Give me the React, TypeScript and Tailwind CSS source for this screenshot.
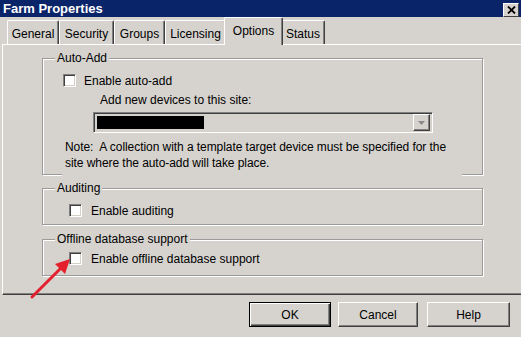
import React from 'react'

const font = { fontFamily: '"Liberation Sans", Arial, sans-serif' }

function Checkbox() {
  return (
    <span className="block w-[13px] h-[13px] shrink-0 bg-white border-t border-l border-[#808080] border-r border-b border-r-white border-b-white shadow-[inset_1px_1px_0_#404040,inset_-1px_-1px_0_#d4d0c8]" />
  )
}

function Tab({ label, width, active }: { label: string; width: string; active?: boolean }) {
  if (active) {
    return (
      <div
        className={`relative z-10 -mx-[2px] mb-[-1px] h-[28px] ${width} bg-[#d6d3ce] border-t border-l border-white border-r border-r-[#404040] shadow-[inset_-1px_0_0_#808080] rounded-t-[2px] flex justify-center pt-[4px] text-[12px] text-black`}
      >
        {label}
      </div>
    )
  }
  return (
    <div
      className={`h-[24px] ${width} border-t border-l border-white border-r border-r-[#404040] shadow-[inset_-1px_0_0_#808080] rounded-t-[2px] flex justify-center pt-[4px] text-[12px] text-black`}
    >
      {label}
    </div>
  )
}

function Button({ label, width, isDefault }: { label: string; width: string; isDefault?: boolean }) {
  return (
    <div
      className={`${width} h-[25px] flex items-center justify-center text-[12px] text-black ${
        isDefault
          ? 'border border-black shadow-[inset_1px_1px_0_#fff,inset_-1px_-1px_0_#404040,inset_-2px_-2px_0_#808080]'
          : 'border-t border-l border-white border-r border-b border-r-[#404040] border-b-[#404040] shadow-[inset_-1px_-1px_0_#808080]'
      }`}
    >
      {label}
    </div>
  )
}

const fieldset =
  'w-[441px] border border-[#9a9a9a] shadow-[inset_1px_1px_0_#fff,1px_1px_0_#fff]'
const legend = 'ml-[12px] px-[2px] leading-[14px] text-[12px] bg-[#d6d3ce]'

export default function App() {
  return (
    <div className="w-[521px] h-[337px] bg-[#d6d3ce] relative overflow-hidden text-black" style={font}>
      {/* title bar */}
      <div className="h-[17px] bg-[#0a246a] flex items-center justify-between pl-[3px] pr-[2px]">
        <span className="text-white font-bold text-[13px] leading-none">Farm Properties</span>
        <div className="w-[16px] h-[14px] mt-[2px] bg-[#d6d3ce] border-t border-l border-white border-r border-b border-r-[#404040] border-b-[#404040] flex items-center justify-center">
          <svg width="9" height="8" viewBox="0 0 9 8">
            <path d="M1 0.5 L8 7.5 M8 0.5 L1 7.5" stroke="#000" strokeWidth="1.8" />
          </svg>
        </div>
      </div>

      {/* tabs */}
      <div className="h-[27px] flex items-end pl-[7px]">
        <Tab label="General" width="w-[52px]" />
        <Tab label="Security" width="w-[55px]" />
        <Tab label="Groups" width="w-[51px]" />
        <Tab label="Licensing" width="w-[61px]" />
        <Tab label="Options" width="w-[59px]" active />
        <Tab label="Status" width="w-[44px]" />
      </div>

      {/* panel */}
      <div className="ml-[2px] h-[251px] border-t border-l border-white border-b border-b-[#404040] shadow-[inset_0_-1px_0_#808080] pl-[39px]">
        <fieldset className={`${fieldset} mt-[6px]`}>
          <legend className={legend}>Auto-Add</legend>
          <div className="mt-[9px] pl-[20px] flex items-center gap-[8px] h-[13px] text-[12px]">
            <Checkbox />
            <span>Enable auto-add</span>
          </div>
          <div className="mt-[6px] pl-[57px] h-[14px] leading-[14px] text-[12px]">Add new devices to this site:</div>
          <div className="mt-[5px] ml-[50px] w-[340px] h-[21px] border-t border-l border-[#808080] border-r border-b border-r-white border-b-white shadow-[inset_1px_1px_0_#404040,inset_-1px_-1px_0_#d4d0c8] flex items-center pl-[3px] pr-[2px]">
            <div className="w-[107px] h-[13px] bg-black" />
            <div className="ml-auto w-[17px] h-[17px] border-t border-l border-white border-r border-b border-r-[#404040] border-b-[#404040] shadow-[inset_-1px_-1px_0_#808080] flex items-center justify-center">
              <svg width="7" height="4" viewBox="0 0 7 4">
                <path d="M0 0 H7 L3.5 4 Z" fill="#8a8a8a" />
              </svg>
            </div>
          </div>
          <div className="relative mt-[6px] ml-[19px] mb-[-2px] w-[400px] h-[37px] pl-[3px] bg-[#d6d3ce] text-[12px] leading-[16px] tracking-[-0.06px]">
            Note:&nbsp; A collection with a template target device must be specified for the
            <br />
            site where the auto-add will take place.
          </div>
        </fieldset>

        <fieldset className={`${fieldset} mt-[6px] pb-[7px]`}>
          <legend className={legend}>Auditing</legend>
          <div className="mt-[9px] pl-[26px] flex items-center gap-[9px] h-[13px] text-[12px]">
            <Checkbox />
            <span>Enable auditing</span>
          </div>
        </fieldset>

        <fieldset className={`${fieldset} mt-[7px] pb-[10px]`}>
          <legend className={legend}>Offline database support</legend>
          <div className="mt-[6px] pl-[26px] flex items-center gap-[9px] h-[13px] text-[12px]">
            <Checkbox />
            <span>Enable offline database support</span>
          </div>
        </fieldset>
      </div>

      {/* buttons */}
      <div className="flex pt-[7px] pl-[249px]">
        <Button label="OK" width="w-[82px]" isDefault />
        <div className="w-[7px]" />
        <Button label="Cancel" width="w-[80px]" />
        <div className="w-[9px]" />
        <Button label="Help" width="w-[83px]" />
      </div>

      {/* red annotation arrow */}
      <svg className="absolute left-0 top-0 pointer-events-none" width="521" height="337">
        <line x1="32" y1="297" x2="61" y2="268" stroke="#e3202b" strokeWidth="3" strokeLinecap="round" />
        <path d="M70 259 L55 264 L65 274 Z" fill="#e3202b" />
      </svg>
    </div>
  )
}
